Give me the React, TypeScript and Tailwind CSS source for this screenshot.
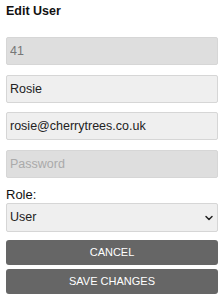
import { ChevronDown } from "lucide-react"

const inputBase =
  "block h-[28px] w-full rounded-[2px] border border-[#d6d6d6] px-[3px] text-[12.5px] text-[#222] outline-none placeholder:text-[#aaa]"

const buttonBase =
  "h-[25px] w-full rounded-[3px] bg-[#666] text-[11px] uppercase text-white"

export default function App() {
  return (
    <div className="min-h-[300px] w-[223px] bg-white pl-[6px] pr-[5px] pt-[2px] font-['Liberation_Sans',Arial,sans-serif]">
      <h2 className="text-[12.5px] font-bold leading-[18px] text-[#111]">Edit User</h2>

      <form className="mt-[17px] flex flex-col gap-[9.5px]" onSubmit={(e) => e.preventDefault()}>
        <input className={`${inputBase} bg-[#dedede] text-[#777]`} value="41" readOnly disabled />
        <input className={`${inputBase} bg-[#efefef]`} defaultValue="Rosie" />
        <input className={`${inputBase} bg-[#efefef]`} defaultValue="rosie@cherrytrees.co.uk" />
        <input className={`${inputBase} bg-[#dedede]`} placeholder="Password" type="password" disabled />

        <div className="flex flex-col">
          <label className="text-[13px] leading-[16px] text-[#111]">Role:</label>
          <div className="relative">
            <select className={`${inputBase} h-[29px] appearance-none bg-[#efefef]`} defaultValue="User">
              <option>User</option>
              <option>Admin</option>
            </select>
            <ChevronDown
              className="pointer-events-none absolute right-[3px] top-1/2 size-[12px] -translate-y-1/2 text-[#222]"
              strokeWidth={3}
            />
          </div>
        </div>

        <div className="-mt-[1.5px] flex flex-col gap-[4px]">
          <button type="button" className={buttonBase}>
            Cancel
          </button>
          <button type="submit" className={buttonBase}>
            Save Changes
          </button>
        </div>
      </form>
    </div>
  )
}
